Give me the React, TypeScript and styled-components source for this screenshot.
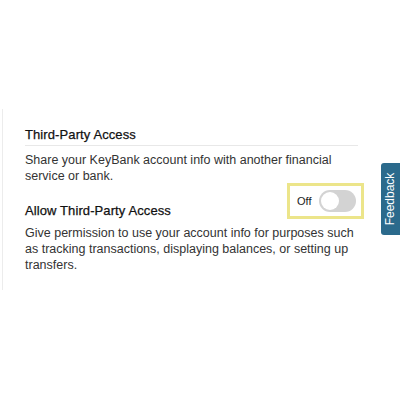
import React from 'react';
import styled, { createGlobalStyle } from 'styled-components';

const GlobalStyle = createGlobalStyle`
  html, body {
    margin: 0;
    padding: 0;
    background: #ffffff;
    font-family: "Liberation Sans", Arial, sans-serif;
  }
`;

const Page = styled.div`
  position: relative;
  width: 400px;
  height: 400px;
  overflow: hidden;
  padding-top: 109px;
  box-sizing: border-box;
`;

const Panel = styled.section`
  margin-left: 2px;
  width: 360px;
  height: 181px;
  border-left: 1px solid #ececec;
  box-sizing: border-box;
  padding: 18px 0 0 22px;
`;

const Heading = styled.h2`
  margin: 0;
  font-size: 13px;
  font-weight: 500;
  color: #111111;
  line-height: 16px;
  letter-spacing: 0.1px;
  -webkit-text-stroke: 0.25px #111111;
`;

const Divider = styled.hr`
  margin: 2px 0 0 0;
  width: 333px;
  border: none;
  border-top: 1px solid #e8e8e8;
`;

const Body = styled.p`
  margin: 6px 0 0 0;
  width: 335px;
  font-size: 12.5px;
  line-height: 16px;
  color: #333333;
`;

const Row = styled.div`
  display: flex;
  justify-content: space-between;
  align-items: flex-end;
  width: 339px;
  margin-top: -1px;
`;

const SubHeading = styled(Heading)`
  padding-bottom: 0;
`;

const ToggleBox = styled.div`
  display: flex;
  align-items: center;
  gap: 8px;
  width: 77px;
  height: 36px;
  box-sizing: border-box;
  border: 3px solid #ece58a;
  padding: 0 5px 0 7px;
`;

const ToggleLabel = styled.span`
  font-size: 11px;
  color: #222222;
`;

const Track = styled.button<{ on?: boolean }>`
  position: relative;
  width: 41px;
  height: 22px;
  padding: 0;
  border: none;
  border-radius: 11px;
  background: ${(p) => (p.on ? '#2a6a8f' : '#d3d3d3')};
  cursor: pointer;
`;

const Knob = styled.span<{ on?: boolean }>`
  position: absolute;
  top: 2px;
  left: ${(p) => (p.on ? '21px' : '2px')};
  width: 18px;
  height: 18px;
  border-radius: 50%;
  background: #ffffff;
`;

const FeedbackTab = styled.div`
  position: absolute;
  right: 0;
  top: 163px;
  width: 19px;
  height: 72px;
  background: #2b6a8c;
  border-radius: 3px 0 0 3px;
  display: flex;
  align-items: center;
  justify-content: center;
`;

const FeedbackText = styled.span`
  transform: rotate(-90deg);
  white-space: nowrap;
  color: #ffffff;
  font-size: 12px;
`;

export default function App(): React.ReactElement {
  return (
    <>
      <GlobalStyle />
      <Page>
        <Panel>
          <Heading>Third-Party Access</Heading>
          <Divider />
          <Body>
            Share your KeyBank account info with another financial service or
            bank.
          </Body>
          <Row>
            <SubHeading>Allow Third-Party Access</SubHeading>
            <ToggleBox>
              <ToggleLabel>Off</ToggleLabel>
              <Track aria-label="Allow Third-Party Access">
                <Knob />
              </Track>
            </ToggleBox>
          </Row>
          <Body>
            Give permission to use your account info for purposes such as
            tracking transactions, displaying balances, or setting up
            transfers.
          </Body>
        </Panel>
        <FeedbackTab>
          <FeedbackText>Feedback</FeedbackText>
        </FeedbackTab>
      </Page>
    </>
  );
}
